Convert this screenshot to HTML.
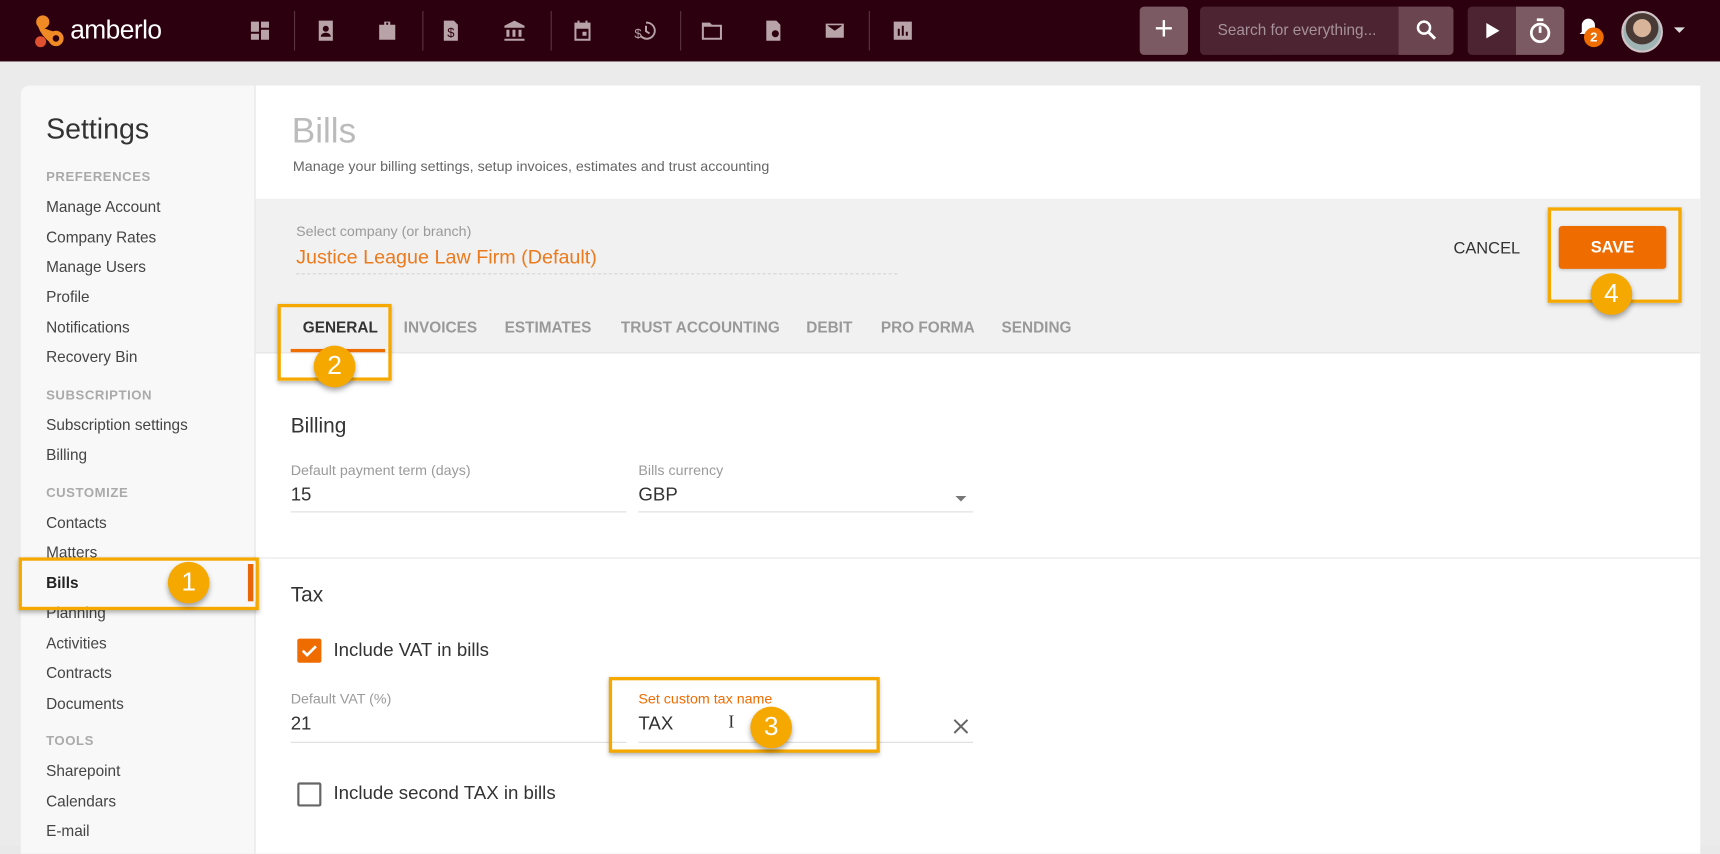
<!DOCTYPE html>
<html><head><meta charset="utf-8"><style>
*{margin:0;padding:0;box-sizing:border-box}
html,body{width:1720px;height:846px;overflow:hidden;background:#e9e9e9;font-family:"Liberation Sans",sans-serif}
#w{position:absolute;left:0;top:0;width:1568px;height:771px;transform:scale(1.09694,1.0973);transform-origin:0 0;background:#ebebeb}
.a{position:absolute;white-space:nowrap}
.top{position:absolute;left:0;top:0;width:1568px;height:56px;background:#2d0010}
.ic{position:absolute;top:17px;width:22px;height:22px;fill:#b8a3a9}
.sep{position:absolute;top:10px;width:1px;height:36px;background:#5a3440}
.side{position:absolute;left:19px;top:78px;width:214px;height:700px;background:#f8f8f8;border-right:1px solid #e2e2e2;border-radius:8px 0 0 0}
.main{position:absolute;left:233px;top:78px;width:1317px;height:700px;background:#fff}
.h{font-size:12px;font-weight:bold;color:#aaa;letter-spacing:.5px;left:42px}
.it{font-size:14px;color:#444;left:42px}
.tab{font-size:14px;font-weight:bold;color:#999;top:290px}
.lbl{font-size:13px;color:#9a9a9a}
.val{font-size:17px;color:#333}
.ul{position:absolute;height:1px;background:#ddd}
.box{position:absolute;border:3px solid #f5a800;box-shadow:0 2px 4px rgba(0,0,0,.3)}
.num{position:absolute;width:38px;height:38px;border-radius:50%;background:#f5a800;color:#fff;font-size:24px;text-align:center;line-height:38px;box-shadow:0 3px 5px rgba(0,0,0,.35)}
</style></head><body><div id="w">
<div class="top">
 <svg class="a" style="left:30px;top:13px" width="32" height="32" viewBox="0 0 32 32"><circle cx="9" cy="7" r="6" fill="#f08a24"/><path d="M5 10 Q12 14 20 16 L16 26 Q8 20 5 12Z" fill="#f08a24"/><circle cx="21" cy="22" r="7" fill="#f08a24"/><circle cx="21" cy="22" r="3" fill="#2d0010"/><circle cx="7" cy="25" r="5" fill="#e05030"/></svg>
 <div class="a" style="left:64px;top:14px;font-size:24px;color:#fff;font-weight:300;letter-spacing:-.5px">amberlo</div>
 <svg class="ic" style="left:226px" viewBox="0 0 24 24"><path d="M3 13h8V3H3zm0 8h8v-6H3zm10 0h8V11h-8zm0-18v6h8V3z"/></svg>
 <div class="sep" style="left:268px"></div>
 <svg class="ic" style="left:286px" viewBox="0 0 24 24"><path d="M5 2h14v20H5zM12 7a3 3 0 100 6 3 3 0 000-6zM7 18h10c0-3-3-4-5-4s-5 1-5 4z" fill-rule="evenodd"/></svg>
 <svg class="ic" style="left:342px" viewBox="0 0 24 24"><path d="M9 3h6v3h5v15H4V6h5zm2 1v2h2V4z" fill-rule="evenodd"/></svg>
 <div class="sep" style="left:385px"></div>
 <svg class="ic" style="left:400px" viewBox="0 0 24 24"><path d="M5 2h10l4 4v16H5z"/><text x="12" y="18" font-size="13" fill="#2d0010" text-anchor="middle" font-family="Liberation Sans">$</text></svg>
 <svg class="ic" style="left:458px" viewBox="0 0 24 24"><path d="M12 2l10 5v2H2V7zM4 11h3v7H4zm6 0h3v7h-3zm6 0h3v7h-3zM2 20h20v2H2z"/></svg>
 <div class="sep" style="left:502px"></div>
 <svg class="ic" style="left:520px" viewBox="0 0 24 24"><path d="M4 4h3V2h2v2h6V2h2v2h3v18H4zm2 6v10h12V10zm6 3h4v4h-4z" fill-rule="evenodd"/></svg>
 <svg class="ic" style="left:577px" viewBox="0 0 24 24"><path d="M13 3a9 9 0 11-6 15l1.5-1.5A7 7 0 1013 5zM12 7h2v5l3 2-1 1.5-4-2.5z"/><text x="5" y="19" font-size="13" text-anchor="middle" font-family="Liberation Sans">$</text></svg>
 <div class="sep" style="left:620px"></div>
 <svg class="ic" style="left:638px" viewBox="0 0 24 24"><path d="M2 4h8l2 2h10v15H2zm2 4v11h16V8z" fill-rule="evenodd"/></svg>
 <svg class="ic" style="left:694px" viewBox="0 0 24 24"><path d="M5 2h10l4 4v16H5z"/><circle cx="14" cy="15" r="3.5" fill="#2d0010"/></svg>
 <svg class="ic" style="left:750px" viewBox="0 0 24 24"><path d="M3 5h18v14H3zm2 2l7 5 7-5v-.5H5z" fill-rule="evenodd"/></svg>
 <div class="sep" style="left:792px"></div>
 <svg class="ic" style="left:812px" viewBox="0 0 24 24"><path d="M3 3h18v18H3zm4 7v7h2v-7zm4-3v10h2V7zm4 6v4h2v-4z" fill-rule="evenodd"/></svg>
 <div class="a" style="left:1039px;top:6px;width:44px;height:44px;background:#7b5a64;border-radius:4px;color:#fff;font-size:30px;text-align:center;line-height:42px">+</div>
 <div class="a" style="left:1094px;top:6px;width:231px;height:44px;background:#4d2431;border-radius:4px"></div>
 <div class="a" style="left:1275px;top:6px;width:50px;height:44px;background:#6b4650;border-radius:0 4px 4px 0"></div>
 <div class="a" style="left:1110px;top:19px;font-size:14px;color:#a6929a">Search for everything...</div>
 <svg class="a" style="left:1289px;top:16px" width="22" height="22" viewBox="0 0 24 24"><circle cx="10" cy="10" r="6" stroke="#fff" stroke-width="2.5" fill="none"/><path d="M14.5 14.5L21 21" stroke="#fff" stroke-width="3"/></svg>
 <div class="a" style="left:1338px;top:6px;width:44px;height:44px;background:#4d2431;border-radius:4px 0 0 4px"></div>
 <div class="a" style="left:1382px;top:6px;width:44px;height:44px;background:#7b5a64;border-radius:0 4px 4px 0"></div>
 <svg class="a" style="left:1351px;top:19px" width="18" height="18" viewBox="0 0 18 18"><path d="M4 2l12 7-12 7z" fill="#fff"/></svg>
 <svg class="a" style="left:1392px;top:15px" width="24" height="26" viewBox="0 0 24 26"><circle cx="12" cy="15" r="8" stroke="#fff" stroke-width="2.5" fill="none"/><path d="M9 3h6M12 9v6" stroke="#fff" stroke-width="2.5"/></svg>
 <svg class="a" style="left:1438px;top:15px" width="20" height="22" viewBox="0 0 20 22"><path d="M10 2a6 6 0 016 6v6l2 2H2l2-2V8a6 6 0 016-6z" fill="#fff"/></svg>
 <div class="a" style="left:1444px;top:25px;width:18px;height:18px;border-radius:50%;background:#ef6c00;color:#fff;font-size:12px;text-align:center;line-height:18px;font-weight:bold">2</div>
 <div class="a" style="left:1478px;top:10px;width:38px;height:38px;border-radius:50%;background:radial-gradient(circle at 50% 40%,#d8b49a 0 30%,#4a3a36 32% 55%,#9fb4b4 57%);border:2px solid #cfc3c6"></div>
 <div class="a" style="left:1526px;top:25px;border:5px solid transparent;border-top:5px solid #ddd"></div>
</div>
<div class="side"></div>
<div class="main"></div>
<div class="a" style="left:42px;top:102px;font-size:26px;color:#333">Settings</div>
<div class="a h" style="top:154px">PREFERENCES</div>
<div class="a it" style="top:180px">Manage Account</div>
<div class="a it" style="top:208px">Company Rates</div>
<div class="a it" style="top:235px">Manage Users</div>
<div class="a it" style="top:262px">Profile</div>
<div class="a it" style="top:290px">Notifications</div>
<div class="a it" style="top:317px">Recovery Bin</div>
<div class="a h" style="top:353px">SUBSCRIPTION</div>
<div class="a it" style="top:379px">Subscription settings</div>
<div class="a it" style="top:406px">Billing</div>
<div class="a h" style="top:442px">CUSTOMIZE</div>
<div class="a it" style="top:468px">Contacts</div>
<div class="a it" style="top:495px">Matters</div>
<div class="a" style="left:19px;top:512px;width:214px;height:36px;background:#f8f8f8"></div>
<div class="a it" style="top:523px;font-weight:bold;color:#222">Bills</div>
<div class="a" style="left:226px;top:514px;width:5px;height:34px;background:#e8650a"></div>
<div class="a it" style="top:550px">Planning</div>
<div class="a it" style="top:578px">Activities</div>
<div class="a it" style="top:605px">Contracts</div>
<div class="a it" style="top:633px">Documents</div>
<div class="a h" style="top:668px">TOOLS</div>
<div class="a it" style="top:694px">Sharepoint</div>
<div class="a it" style="top:722px">Calendars</div>
<div class="a it" style="top:749px">E-mail</div>

<div class="a" style="left:266px;top:101px;font-size:32px;color:#bbb;font-weight:300">Bills</div>
<div class="a" style="left:267px;top:144px;font-size:13px;color:#666">Manage your billing settings, setup invoices, estimates and trust accounting</div>
<div class="a" style="left:233px;top:181px;width:1317px;height:141px;background:#f1f1f1;border-bottom:1px solid #e4e4e4"></div>
<div class="a lbl" style="left:270px;top:203px">Select company (or branch)</div>
<div class="a" style="left:270px;top:224px;font-size:18px;color:#ec7a1c">Justice League Law Firm (Default)</div>
<div class="a" style="left:270px;top:249px;width:548px;border-top:1px dashed #d6d6d6"></div>
<div class="a" style="left:1325px;top:218px;font-size:15px;color:#333">CANCEL</div>
<div class="a" style="left:1421px;top:206px;width:98px;height:39px;background:#ef6c00;border-radius:3px;color:#fff;font-weight:bold;font-size:15px;text-align:center;line-height:39px;box-shadow:0 1px 3px rgba(0,0,0,.2)">SAVE</div>
<div class="a tab" style="left:276px;color:#333">GENERAL</div>
<div class="a tab" style="left:368px">INVOICES</div>
<div class="a tab" style="left:460px">ESTIMATES</div>
<div class="a tab" style="left:566px">TRUST ACCOUNTING</div>
<div class="a tab" style="left:735px">DEBIT</div>
<div class="a tab" style="left:803px">PRO FORMA</div>
<div class="a tab" style="left:913px">SENDING</div>
<div class="a" style="left:265px;top:318px;width:86px;height:3px;background:#ef6c00"></div>

<div class="a" style="left:265px;top:378px;font-size:19px;color:#333">Billing</div>
<div class="a lbl" style="left:265px;top:421px">Default payment term (days)</div>
<div class="a val" style="left:265px;top:441px">15</div>
<div class="ul" style="left:265px;top:466px;width:306px"></div>
<div class="a lbl" style="left:582px;top:421px">Bills currency</div>
<div class="a val" style="left:582px;top:441px">GBP</div>
<div class="a" style="left:871px;top:452px;border:5px solid transparent;border-top:5px solid #777"></div>
<div class="ul" style="left:582px;top:466px;width:305px"></div>
<div class="ul" style="left:233px;top:508px;width:1317px;background:#e6e6e6"></div>
<div class="a" style="left:265px;top:532px;font-size:19px;color:#333">Tax</div>
<div class="a" style="left:271px;top:582px;width:22px;height:22px;background:#ef6c00;border-radius:2px"></div>
<svg class="a" style="left:271px;top:582px" width="22" height="22" viewBox="0 0 22 22"><path d="M5 11l4 4 8-8" stroke="#fff" stroke-width="2.4" fill="none"/></svg>
<div class="a" style="left:304px;top:583px;font-size:17px;color:#333">Include VAT in bills</div>
<div class="a lbl" style="left:265px;top:629px">Default VAT (%)</div>
<div class="a val" style="left:265px;top:650px">21</div>
<div class="ul" style="left:265px;top:676px;width:306px"></div>
<div class="a lbl" style="left:582px;top:629px;color:#ef6c00">Set custom tax name</div>
<div class="a val" style="left:582px;top:650px">TAX</div>
<div class="a" style="left:664px;top:650px;font-size:16px;color:#333;font-family:'Liberation Serif',serif">I</div>
<svg class="a" style="left:868px;top:654px" width="16" height="16" viewBox="0 0 16 16"><path d="M2 2l12 12M14 2L2 14" stroke="#666" stroke-width="1.8"/></svg>
<div class="ul" style="left:582px;top:676px;width:305px"></div>
<div class="a" style="left:271px;top:713px;width:22px;height:22px;border:2px solid #666;border-radius:2px"></div>
<div class="a" style="left:304px;top:713px;font-size:17px;color:#333">Include second TAX in bills</div>

<div class="box" style="left:17px;top:508px;width:219px;height:48px"></div>
<div class="box" style="left:253px;top:277px;width:104px;height:70px"></div>
<div class="box" style="left:555px;top:617px;width:247px;height:69px"></div>
<div class="box" style="left:1411px;top:189px;width:122px;height:87px"></div>
<div class="num" style="left:153px;top:512px">1</div>
<div class="num" style="left:286px;top:315px">2</div>
<div class="num" style="left:684px;top:644px">3</div>
<div class="num" style="left:1450px;top:249px">4</div>
</div></body></html>
